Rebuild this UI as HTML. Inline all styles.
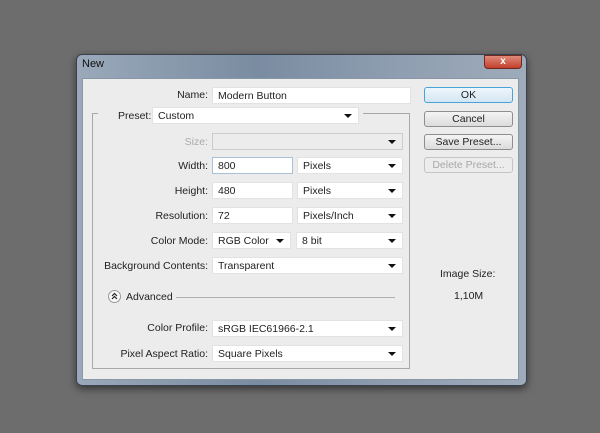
<!DOCTYPE html><html><head><style>
*{box-sizing:border-box}
body{margin:0;width:600px;height:433px;background:#6d6d6d;font-family:"Liberation Sans",sans-serif;font-size:10.5px;color:#222;position:relative;overflow:hidden}
.a{position:absolute}
.win{left:76px;top:54px;width:451px;height:332px;border-radius:6px;background:linear-gradient(90deg,#9aa9ba,#7a8ca1 40%,#8e9db0 70%,#9eabba);border:1px solid #3a4250;box-shadow:0 3px 8px rgba(0,0,0,.5)}
.in{left:82px;top:78px;width:437px;height:302px;background:#ececec;border:1px solid #8a97a6}
.lbl{text-align:right;width:130px}
.f{background:#fff;border:1px solid #e2e2e2;padding:1px 5px;height:17px;line-height:14px}
.f.s::after{content:"";position:absolute;right:6px;top:6px;border:4px solid transparent;border-top:4px solid #111}
.btn{left:424px;width:89px;height:16px;border:1px solid #8e8e8e;border-radius:3px;background:linear-gradient(#f4f4f4,#dcdcdc);text-align:center;line-height:14px}
</style></head><body>
<div class="a win"></div>
<div class="a" style="left:82px;top:58px;color:#111;font-size:11px">New</div>
<div class="a" style="left:484px;top:55px;width:38px;height:14px;border-radius:0 0 4px 4px;background:linear-gradient(#e08a7a,#c3402c);border:1px solid #6d2a20;color:#fff;font-size:10px;text-align:center;line-height:12px;font-weight:bold">x</div>
<div class="a in"></div>
<div class="a" style="left:92px;top:113px;width:318px;height:256px;border:1px solid #a8a8a8;border-top:none"></div>
<div class="a" style="left:92px;top:113px;width:6px;border-top:1px solid #a8a8a8"></div>
<div class="a" style="left:363px;top:113px;width:47px;border-top:1px solid #a8a8a8"></div>

<div class="a lbl" style="left:78px;top:89px">Name:</div><div class="a f" style="left:212px;top:87px;width:199px">Modern Button</div>
<div class="a" style="left:118px;top:110px">Preset:</div><div class="a f s" style="left:152px;top:107px;width:207px">Custom</div>
<div class="a lbl" style="left:78px;top:136px;color:#aaa">Size:</div><div class="a f s" style="left:212px;top:133px;width:191px;background:#ececec;border-color:#ccc"></div>
<div class="a lbl" style="left:78px;top:160px">Width:</div><div class="a f" style="left:212px;top:157px;width:81px;border-color:#a8c0d8">800</div><div class="a f s" style="left:297px;top:157px;width:106px">Pixels</div>
<div class="a lbl" style="left:78px;top:185px">Height:</div><div class="a f" style="left:212px;top:182px;width:81px">480</div><div class="a f s" style="left:297px;top:182px;width:106px">Pixels</div>
<div class="a lbl" style="left:78px;top:210px">Resolution:</div><div class="a f" style="left:212px;top:207px;width:81px">72</div><div class="a f s" style="left:297px;top:207px;width:106px">Pixels/Inch</div>
<div class="a lbl" style="left:78px;top:235px">Color Mode:</div><div class="a f s" style="left:212px;top:232px;width:79px">RGB Color</div><div class="a f s" style="left:296px;top:232px;width:107px">8 bit</div>
<div class="a lbl" style="left:78px;top:260px">Background Contents:</div><div class="a f s" style="left:212px;top:257px;width:191px">Transparent</div>
<div class="a" style="left:108px;top:290px;width:13px;height:13px;border:1px solid #999;border-radius:50%;background:#fafafa"><svg width="11" height="11" style="position:absolute;left:0;top:0"><path d="M3 5L5.5 2.5L8 5M3 8L5.5 5.5L8 8" stroke="#222" fill="none" stroke-width="1.2"/></svg></div>
<div class="a" style="left:126px;top:291px">Advanced</div>
<div class="a" style="left:176px;top:297px;width:219px;border-top:1px solid #b0b0b0"></div>
<div class="a lbl" style="left:78px;top:322px">Color Profile:</div><div class="a f s" style="left:212px;top:320px;width:191px">sRGB IEC61966-2.1</div>
<div class="a lbl" style="left:78px;top:348px">Pixel Aspect Ratio:</div><div class="a f s" style="left:212px;top:345px;width:191px">Square Pixels</div>

<div class="a btn" style="top:87px;border-color:#4aa3d8;background:linear-gradient(#eef6fc,#d3e6f3)">OK</div>
<div class="a btn" style="top:111px">Cancel</div>
<div class="a btn" style="top:134px">Save Preset...</div>
<div class="a btn" style="top:157px;color:#a8a8a8;border-color:#c4c4c4;background:#ececec">Delete Preset...</div>
<div class="a" style="left:440px;top:268px">Image Size:</div>
<div class="a" style="left:454px;top:290px">1,10M</div>
</body></html>
